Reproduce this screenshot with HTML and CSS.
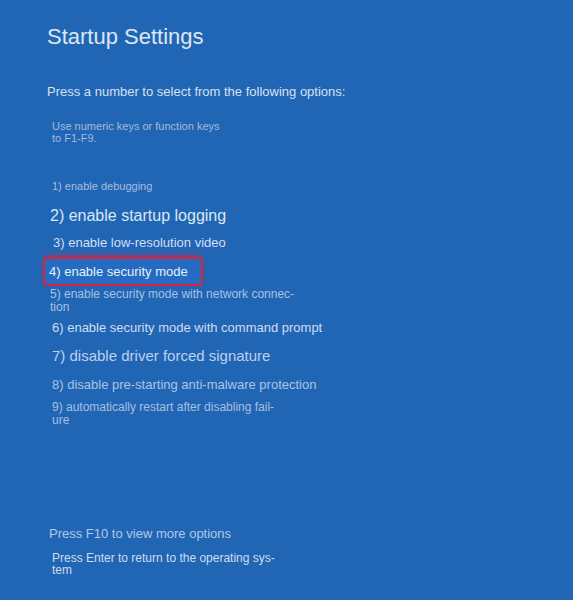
FILE: index.html
```html
<!DOCTYPE html>
<html lang="en">
<head>
<meta charset="utf-8">
<title>Startup Settings</title>
<link rel="stylesheet" href="styles.css">
</head>
<body>
<main class="screen">
  <h1 class="title">Startup Settings</h1>
  <p class="lead">Press a number to select from the following options:</p>
  <p class="hint">Use numeric keys or function keys<br>to F1-F9.</p>
  <ol class="options">
    <li class="opt o1">1) enable debugging</li>
    <li class="opt o2">2) enable startup logging</li>
    <li class="opt o3">3) enable low-resolution video</li>
    <li class="opt o4"><span class="selected">4) enable security mode</span></li>
    <li class="opt o5">5) enable security mode with network connec-<br>tion</li>
    <li class="opt o6">6) enable security mode with command prompt</li>
    <li class="opt o7">7) disable driver forced signature</li>
    <li class="opt o8">8) disable pre-starting anti-malware protection</li>
    <li class="opt o9">9) automatically restart after disabling fail-<br>ure</li>
  </ol>
  <p class="more">Press F10 to view more options</p>
  <p class="back">Press Enter to return to the operating sys-<br>tem</p>
</main>
</body>
</html>
```

FILE: styles.css
```css
html, body {
  margin: 0;
  padding: 0;
  height: 100%;
}
body {
  background: #2166b4;
  font-family: "Liberation Sans", Arial, sans-serif;
  overflow: hidden;
}
.screen {
  display: flex;
  flex-direction: column;
  align-items: flex-start;
  padding: 24.4px 0 0 47px;
}
.screen p, .screen h1, .options, .opt {
  margin: 0;
  padding: 0;
  list-style: none;
  white-space: nowrap;
}
.options {
  display: flex;
  flex-direction: column;
  align-items: flex-start;
}
.title {
  font-size: 22px;
  line-height: 26px;
  font-weight: normal;
  color: #dde7f4;
}
.lead {
  margin-top: 34px !important;
  font-size: 13px;
  line-height: 16px;
  color: #d5e1f2;
}
.hint {
  margin: 20px 0 0 5px !important;
  font-size: 11px;
  line-height: 12px;
  color: #a2badd;
}
.o1 {
  margin: 35.2px 0 0 5px !important;
  font-size: 11px;
  line-height: 13px;
  color: #a5bde0;
}
.o2 {
  margin: 13px 0 0 3px !important;
  font-size: 16px;
  line-height: 19px;
  color: #dbe6f4;
}
.o3 {
  margin: 10.1px 0 0 6px !important;
  font-size: 13px;
  line-height: 16px;
  color: #d3dff1;
}
.o4 {
  margin: 6.2px 0 0 -4px !important;
  font-size: 13px;
  line-height: 16px;
  color: #e8eff9;
}
.selected {
  display: block;
  box-sizing: border-box;
  width: 160px;
  height: 29px;
  padding: 5.2px 10px 0 4px;
  border: 2px solid #e11f3d;
  border-radius: 4px;
  background: #246bc1;
  box-shadow: 0 -5px 6px -3px rgba(225, 35, 70, 0.55);
}
.o5 {
  margin: 2.3px 0 0 3px !important;
  font-size: 12px;
  line-height: 12.5px;
  color: #aac1e3;
}
.o6 {
  margin: 6.9px 0 0 5px !important;
  font-size: 13px;
  line-height: 16px;
  color: #d0ddf0;
}
.o7 {
  margin: 11.3px 0 0 5px !important;
  font-size: 15px;
  line-height: 18px;
  color: #bed1ec;
}
.o8 {
  margin: 11.3px 0 0 5px !important;
  font-size: 13px;
  line-height: 16px;
  color: #adc3e3;
}
.o9 {
  margin: 8.5px 0 0 5px !important;
  font-size: 12px;
  line-height: 12.5px;
  color: #a8bfe0;
}
.more {
  margin: 100.2px 0 0 2px !important;
  font-size: 13px;
  line-height: 16px;
  color: #b3c8e7;
}
.back {
  margin: 9.4px 0 0 5px !important;
  font-size: 12px;
  line-height: 12.5px;
  color: #cfdcf0;
}
```
